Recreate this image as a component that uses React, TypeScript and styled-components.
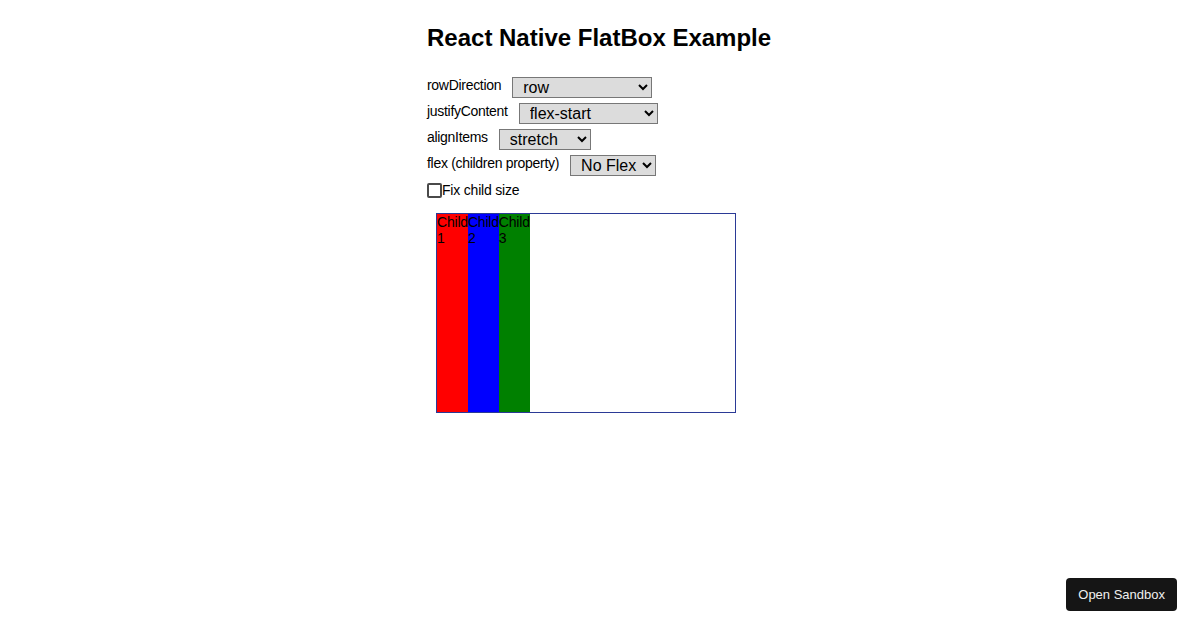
import { useState } from 'react';
import styled, { createGlobalStyle } from 'styled-components';

const GlobalStyle = createGlobalStyle`
  body {
    margin: 8px;
    background: #fff;
    color: #000;
    font-family: "Liberation Sans", Arial, sans-serif;
  }
`;

const Page = styled.div`
  display: flex;
  justify-content: center;
`;

const Column = styled.div`
  display: flex;
  flex-direction: column;
  align-items: flex-start;
  width: 346px;
`;

const Title = styled.h1`
  font-size: 24px;
  font-weight: bold;
  white-space: nowrap;
  margin: 16px 0 25px;
`;

const Row = styled.div`
  display: flex;
  align-items: flex-start;
  height: 26px;
  font-size: 14px;
  letter-spacing: -0.3px;
`;

const Label = styled.label`
  line-height: 16px;
`;

const Select = styled.select<{ $width: number }>`
  width: ${(p) => p.$width}px;
  height: 21px;
  margin-left: 11px;
  padding: 0 2px 0 6px;
  font-family: "Liberation Sans", Arial, sans-serif;
  font-size: 16px;
  letter-spacing: 0;
  color: #000;
  background: #dcdcdc;
  border: 1px solid #777;
  border-radius: 0;
`;

const CheckRow = styled.label`
  display: flex;
  align-items: center;
  font-size: 14px;
  letter-spacing: -0.2px;
  line-height: 16px;
  margin-top: 1px;
`;

const Check = styled.input`
  appearance: none;
  width: 15px;
  height: 15px;
  margin: 0;
  border: 2px solid #4a4a4a;
  border-radius: 2px;
  background: #fff;
  box-sizing: border-box;
`;

const Box = styled.div<{ $dir: string; $justify: string; $align: string }>`
  display: flex;
  flex-direction: ${(p) => p.$dir};
  justify-content: ${(p) => p.$justify};
  align-items: ${(p) => p.$align};
  box-sizing: border-box;
  width: 300px;
  height: 200px;
  margin: 15px 0 0 9px;
  border: 1px solid #2b3a96;
`;

const Child = styled.div<{ $color: string; $flex: boolean; $fixed: boolean }>`
  background: ${(p) => p.$color};
  font-size: 14px;
  letter-spacing: -0.2px;
  line-height: 16px;
  width: min-content;
  ${(p) => (p.$flex ? 'flex: 1;' : '')}
  ${(p) => (p.$fixed ? 'width: 50px; height: 50px;' : '')}
`;

const SandboxButton = styled.button`
  position: fixed;
  right: 23px;
  bottom: 19px;
  height: 33px;
  padding: 0 12px;
  border: none;
  border-radius: 4px;
  background: #151515;
  color: #f0f0f0;
  font-family: "Liberation Sans", Arial, sans-serif;
  font-size: 13px;
`;

export default function App() {
  const [dir, setDir] = useState('row');
  const [justify, setJustify] = useState('flex-start');
  const [align, setAlign] = useState('stretch');
  const [flex, setFlex] = useState('none');
  const [fixed, setFixed] = useState(false);

  return (
    <>
      <GlobalStyle />
      <Page>
        <Column>
          <Title>React Native FlatBox Example</Title>
          <Row>
            <Label>rowDirection</Label>
            <Select $width={140} value={dir} onChange={(e) => setDir(e.target.value)}>
              <option value="row">row</option>
              <option value="column">column</option>
              <option value="row-reverse">row-reverse</option>
              <option value="column-reverse">column-reverse</option>
            </Select>
          </Row>
          <Row>
            <Label>justifyContent</Label>
            <Select $width={139} value={justify} onChange={(e) => setJustify(e.target.value)}>
              <option value="flex-start">flex-start</option>
              <option value="center">center</option>
              <option value="flex-end">flex-end</option>
              <option value="space-between">space-between</option>
              <option value="space-around">space-around</option>
            </Select>
          </Row>
          <Row>
            <Label>alignItems</Label>
            <Select $width={92} value={align} onChange={(e) => setAlign(e.target.value)}>
              <option value="stretch">stretch</option>
              <option value="flex-start">flex-start</option>
              <option value="center">center</option>
              <option value="flex-end">flex-end</option>
            </Select>
          </Row>
          <Row>
            <Label>flex (children property)</Label>
            <Select $width={86} value={flex} onChange={(e) => setFlex(e.target.value)}>
              <option value="none">No Flex</option>
              <option value="flex">Flex 1</option>
            </Select>
          </Row>
          <CheckRow>
            <Check type="checkbox" checked={fixed} onChange={(e) => setFixed(e.target.checked)} />
            Fix child size
          </CheckRow>
          <Box $dir={dir} $justify={justify} $align={align}>
            <Child $color="red" $flex={flex === 'flex'} $fixed={fixed}>Child 1</Child>
            <Child $color="blue" $flex={flex === 'flex'} $fixed={fixed}>Child 2</Child>
            <Child $color="green" $flex={flex === 'flex'} $fixed={fixed}>Child 3</Child>
          </Box>
        </Column>
      </Page>
      <SandboxButton>Open Sandbox</SandboxButton>
    </>
  );
}
